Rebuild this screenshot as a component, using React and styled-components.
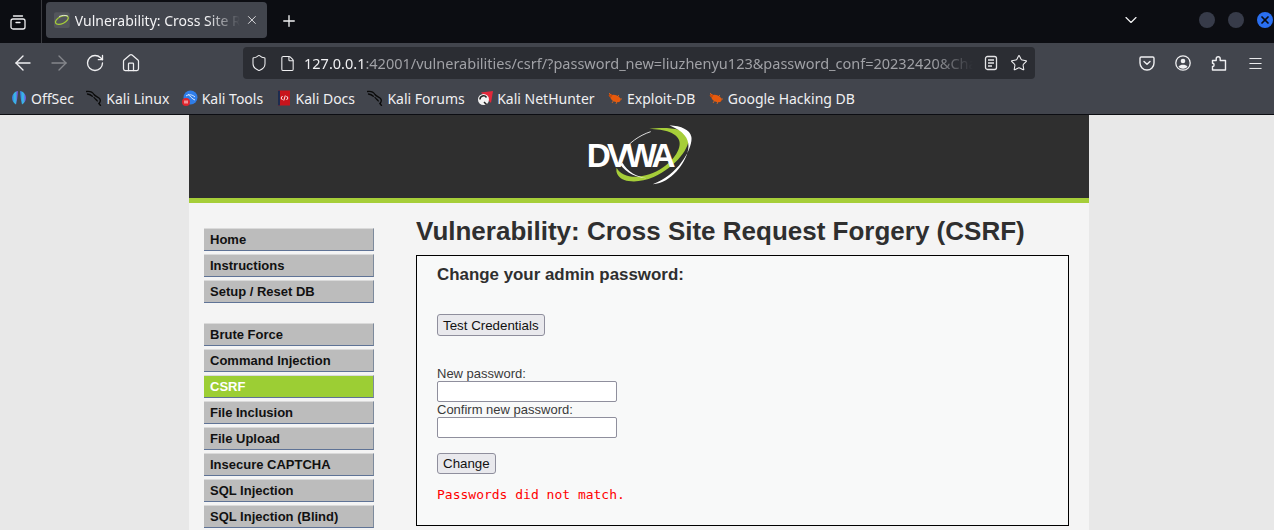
import React from 'react'
import styled, { createGlobalStyle } from 'styled-components'
import {
  ArrowLeft,
  ArrowRight,
  RotateCw,
  House,
  Shield,
  File,
  Star,
  Plus,
  X,
  ChevronDown,
  Menu as MenuIcon,
} from 'lucide-react'

const GlobalStyle = createGlobalStyle`
  html, body {
    margin: 0;
    padding: 0;
    overflow: hidden;
    background: #e8e8e8;
  }
  * { box-sizing: border-box; }
`

const ViewIcon = () => (
  <svg width="16" height="16" viewBox="0 0 16 16" fill="none" stroke="#f0f0f2" strokeWidth="1.300" strokeLinecap="round">
    <rect x="1" y="5" width="14" height="10" rx="2" />
    <path d="M3.500 2h9" />
    <path d="M6 8.500h4" />
  </svg>
)

const TabFavicon = () => (
  <svg width="16" height="16" viewBox="0 0 16 16" fill="none">
    <rect width="16" height="16" rx="2" fill="#53565c" />
    <ellipse cx="8" cy="8" rx="7" ry="3.600" transform="rotate(-25 8 8)" stroke="#a6ce39" strokeWidth="1.300" />
    <path d="M5 4.500C8 3 12 3 14 4" stroke="#eee" strokeWidth="0.800" />
  </svg>
)

const ReaderIcon = () => (
  <svg width="14" height="16" viewBox="0 0 14 16" fill="none" stroke="#e4e4e6" strokeWidth="1.300">
    <rect x="1.500" y="1.500" width="11" height="13" rx="2" />
    <path d="M4 5h6M4 8h6M4 11h4" />
  </svg>
)

const PocketIcon = () => (
  <svg width="16" height="16" viewBox="0 0 16 16" fill="none" stroke="#f0f0f2" strokeWidth="1.400" strokeLinecap="round" strokeLinejoin="round">
    <path d="M2.200 2h11.600c.7 0 1.200.5 1.200 1.200V8a7 7 0 0 1-14 0V3.200C1 2.500 1.500 2 2.200 2z" />
    <path d="M5 6.500 8 9.300l3-2.800" />
  </svg>
)

const AccountIcon = () => (
  <svg width="16" height="16" viewBox="0 0 16 16" fill="none" stroke="#f0f0f2" strokeWidth="1.300">
    <circle cx="8" cy="8" r="7.200" />
    <circle cx="8" cy="6" r="2.300" fill="#f0f0f2" stroke="none" />
    <path d="M3.500 11.800c1-1.500 2.600-2 4.500-2s3.500.5 4.500 2c-1 1.300-2.600 2-4.500 2s-3.500-.7-4.500-2z" fill="#f0f0f2" stroke="none" />
  </svg>
)

const PuzzleIcon = () => (
  <svg width="16" height="16" viewBox="0 0 16 16" fill="none" stroke="#f0f0f2" strokeWidth="1.400" strokeLinejoin="round">
    <path d="M1.500 15v-3.500a1.600 1.600 0 0 0 0-3.200V5.500h3.700V3.800a2 2 0 0 1 4 0v1.700h5.300V15z" />
  </svg>
)

const MetaIcon = () => (
  <svg width="16" height="16" viewBox="0 0 16 16">
    <defs>
      <linearGradient id="offsec" x1="0" x2="1" y1="0" y2="0">
        <stop offset="0" stopColor="#3b6fe0" />
        <stop offset="0.5" stopColor="#35c3e6" />
        <stop offset="1" stopColor="#7a3fd6" />
      </linearGradient>
    </defs>
    <path d="M7 1C3.500 1.500 1 4.500 1 8c0 2.800 1.600 5.200 4 6.400C6 11 6.800 6 7 1z" fill="url(#offsec)" />
    <path d="M9 1c3.500.5 6 3.500 6 7 0 2.800-1.600 5.200-4 6.400C10 11 9.200 6 9 1z" fill="url(#offsec)" />
  </svg>
)

const DragonIcon = () => (
  <svg width="16" height="16" viewBox="0 0 16 16" fill="none" stroke="#0a0a0a" strokeWidth="1.300" strokeLinecap="round">
    <path d="M0.500 1.500C4 1 6.500 2 8 4.500c1.500 2 4 2.500 5.500 4 1 1.200.8 3.500-.5 5" />
    <path d="M1.500 4c2 .2 3.500 1 4.800 2.300M8 7.500c1 1.500 2.500 2 3.300 3.500M13 13.500l1.500 2" />
  </svg>
)

const ToolsIcon = () => (
  <svg width="16" height="16" viewBox="0 0 16 16">
    <circle cx="8.500" cy="7.500" r="7" fill="#2f7de8" />
    <path d="M4 6c3-2 6-1.500 9 1M6 4c2 2 4 5 7 6" stroke="#d8e8ff" strokeWidth="1" fill="none" />
    <circle cx="4" cy="12" r="4" fill="#e0242c" />
    <path d="M3 10.500v3M5 10.500v3" stroke="#fff" strokeWidth="1" />
  </svg>
)

const DocsIcon = () => (
  <svg width="16" height="16" viewBox="0 0 16 16">
    <rect x="2" y="0.500" width="12" height="15" fill="#c8141c" />
    <rect x="2" y="0.500" width="2" height="15" fill="#1d2c50" />
    <path d="M6.500 6 5 8l1.500 2M10.500 6 12 8l-1.500 2M9.300 5.500 7.800 10.500" stroke="#fff" strokeWidth="0.900" fill="none" />
  </svg>
)

const NetHunterIcon = () => (
  <svg width="16" height="16" viewBox="0 0 16 16">
    <path d="M4 2.500 16 1 14 13z" fill="#e2283a" />
    <circle cx="6.500" cy="9.500" r="5.500" fill="#f2f2f2" />
    <path d="M3 9.500a3.500 3.500 0 0 1 6.500-2M7 12l2.500 2.500" stroke="#222" strokeWidth="1.500" fill="none" />
  </svg>
)

const BugIcon = () => (
  <svg width="16" height="16" viewBox="0 0 16 16">
    <ellipse cx="8.500" cy="8.500" rx="5.500" ry="3.300" transform="rotate(25 8.500 8.500)" fill="#e8590c" />
    <circle cx="3.500" cy="5.500" r="1.700" fill="#c94a08" />
    <path d="M2 3 4 5M5 13l2-3M9 14l1-3M12 5 10 7M15 9h-3" stroke="#d9641c" strokeWidth="0.900" />
  </svg>
)

const DvwaLogo = () => (
  <svg width="106" height="60" viewBox="78 30 318 180">
    <path d="M268 42c40-6 108-4 117 22 9 30-36 92-104 122-46 20-92 16-106-4-6-8-7-16-5-24 14 28 56 34 98 20 58-20 98-70 90-100-6-24-44-36-90-36z" fill="#a6ce39" />
    <path d="M328 31c36 2 62 14 66 34 6 30-34 112-116 143 58-4 96-66 104-94 8-28 6-58-54-83z" fill="#fff" />
    <path d="M272 50c-36 12-66 34-84 62" stroke="#fff" strokeWidth="2.500" fill="none" />
    <path d="M180 148c18 26 52 42 84 42-34-4-62-20-76-46z" fill="#fff" />
    <text x="80" y="155" fontFamily="'Liberation Sans', Arial, sans-serif" fontWeight="700" fontSize="100" letterSpacing="-11" fill="#fff">DVWA</text>
  </svg>
)

const Shell = styled.div`
  height: 530px;
  display: flex;
  flex-direction: column;
  overflow: hidden;
  font-family: 'Noto Sans', 'Open Sans', sans-serif;
`

const TabBar = styled.div`
  height: 43px;
  flex: none;
  background: #0c0d12;
  display: flex;
  align-items: flex-start;
  color: #f2f2f4;
`

const ViewButton = styled.div`
  width: 42px;
  height: 43px;
  display: flex;
  align-items: center;
  justify-content: center;
  padding: 0 5px 0 0;
  border-right: 1px solid #3a3b40;
`

const Tab = styled.div`
  width: 221px;
  height: 36px;
  margin: 2px 0 0 4px;
  background: #42454d;
  border-radius: 4px;
  display: flex;
  align-items: center;
  padding: 0 8px;
  gap: 5px;
`

const TabTitle = styled.span`
  width: 168px;
  font-size: 14px;
  white-space: nowrap;
  overflow: hidden;
  -webkit-mask-image: linear-gradient(to right, #000 80%, transparent 100%);
  mask-image: linear-gradient(to right, #000 80%, transparent 100%);
`

const NewTab = styled.div`
  margin: 12px 0 0 13px;
  display: flex;
`

const WindowControls = styled.div`
  height: 40px;
  margin-left: auto;
  display: flex;
  align-items: center;
  padding-right: 1px;
`

const Chevron = styled.div`
  display: flex;
  margin-right: 45px;
`

const WinButton = styled.div`
  width: 16px;
  height: 16px;
  border-radius: 50%;
  margin-left: 13px;
  background: ${(p) => (p.$close ? '#2a6ff0' : '#373b49')};
  display: flex;
  align-items: center;
  justify-content: center;
  color: #0a0c12;
`

const NavBar = styled.div`
  height: 36px;
  flex: none;
  background: #42454d;
  display: flex;
  align-items: flex-start;
  padding-top: 4px;
  color: #f0f0f2;
`

const NavButtons = styled.div`
  width: 243px;
  height: 32px;
  display: flex;
  align-items: center;
  padding-left: 5px;
`

const ToolButton = styled.div`
  width: ${(p) => p.$w || 36}px;
  height: 32px;
  flex: none;
  display: flex;
  align-items: center;
  justify-content: center;
`

const UrlBar = styled.div`
  width: 792px;
  height: 32px;
  background: #2b2d33;
  border-radius: 4px;
  display: flex;
  align-items: center;
  padding: 0 2px;
`

const UrlText = styled.div`
  width: 669px;
  margin: 0 4px 0 3px;
  font-size: 14.500px;
  white-space: nowrap;
  overflow: hidden;
  color: #a0a1a6;
  -webkit-mask-image: linear-gradient(to right, #000 94%, transparent 100%);
  mask-image: linear-gradient(to right, #000 94%, transparent 100%);

  strong {
    font-weight: 400;
    color: #f0f0f2;
  }
`

const ToolActions = styled.div`
  height: 32px;
  margin-left: auto;
  padding-right: 1px;
  display: flex;
  align-items: center;
`

const BookmarkBar = styled.div`
  height: 36px;
  flex: none;
  background: #42454d;
  border-bottom: 1px solid #0c0d12;
  display: flex;
  align-items: flex-start;
  padding: 10px 0 0 11px;
  gap: 12.400px;
`

const Bookmark = styled.div`
  display: flex;
  align-items: center;
  gap: 4px;
  height: 18px;
  font-size: 14px;
  color: #f0f0f2;
  white-space: nowrap;
`

const Page = styled.div`
  flex: 1;
  min-height: 0;
  background: #e8e8e8;
  display: flex;
  justify-content: center;
  padding-left: 4px;
  font-family: 'Liberation Sans', Arial, sans-serif;
  color: #2f2f2f;
`

const Container = styled.div`
  width: 900px;
  background: #f4f4f4;
`

const Header = styled.header`
  height: 88px;
  background: #2f2f2f;
  border-bottom: 5px solid #a6ce39;
  display: flex;
  justify-content: center;
  padding-top: 10px;
`

const Body = styled.div`
  display: flex;
  padding: 15px 20px 0 15px;
`

const Sidebar = styled.nav`
  width: 170px;
  flex: none;
  margin-right: 42px;
  padding-top: 10px;
`

const MenuGroup = styled.ul`
  list-style: none;
  margin: 0 0 20px;
  padding: 0;
`

const MenuItem = styled.li`
  height: 23px;
  margin-bottom: 3px;
  padding-left: 6px;
  font-size: 13px;
  font-weight: 700;
  line-height: 22px;
  background: ${(p) => (p.$active ? '#9cce34' : '#bcbcbc')};
  color: ${(p) => (p.$active ? '#fff' : '#111')};
  border-top: 1px solid #dadada;
  border-right: 1px solid #7d8a9c;
  border-bottom: 1px solid #5f7396;
`

const Main = styled.main`
  flex: 1;
`

const Title = styled.h1`
  margin: 0 0 10px;
  font-size: 26px;
  line-height: 27px;
  font-weight: 700;
  color: #2f2f2f;
  white-space: nowrap;
`

const Box = styled.div`
  width: 653px;
  height: 271px;
  background: #f8f9f9;
  border: 1px solid #000;
  padding: 9px 20px 0;
`

const BoxHeading = styled.h3`
  margin: 0 0 30px;
  font-size: 16.900px;
  line-height: 19px;
  font-weight: 700;
`

const Button = styled.button`
  display: block;
  height: ${(p) => p.$h}px;
  padding: 0 5px;
  font-family: 'Liberation Sans', Arial, sans-serif;
  font-size: 13.333px;
  color: #111;
  background: #e9e9ed;
  border: 1px solid #8f8f9d;
  border-radius: 3px;
  margin-bottom: ${(p) => p.$mb}px;
`

const Label = styled.label`
  display: block;
  font-size: 13px;
  line-height: 15px;
  color: #3a3a3a;
`

const Input = styled.input`
  display: block;
  width: 180px;
  height: 21px;
  background: #fff;
  border: 1px solid #8f8f9d;
  border-radius: 2px;
  padding: 0;
  margin-bottom: ${(p) => p.$mb}px;
`

const ErrorText = styled.pre`
  margin: 0;
  font-family: 'DejaVu Sans Mono', monospace;
  font-size: 13px;
  line-height: 16px;
  color: #f00;
`

const bookmarks = [
  { name: 'OffSec', icon: <MetaIcon /> },
  { name: 'Kali Linux', icon: <DragonIcon /> },
  { name: 'Kali Tools', icon: <ToolsIcon /> },
  { name: 'Kali Docs', icon: <DocsIcon /> },
  { name: 'Kali Forums', icon: <DragonIcon /> },
  { name: 'Kali NetHunter', icon: <NetHunterIcon /> },
  { name: 'Exploit-DB', icon: <BugIcon /> },
  { name: 'Google Hacking DB', icon: <BugIcon /> },
]

const topMenu = ['Home', 'Instructions', 'Setup / Reset DB']
const vulnMenu = [
  'Brute Force',
  'Command Injection',
  'CSRF',
  'File Inclusion',
  'File Upload',
  'Insecure CAPTCHA',
  'SQL Injection',
  'SQL Injection (Blind)',
]

function App() {
  return (
    <Shell>
      <GlobalStyle />
      <TabBar>
        <ViewButton>
          <ViewIcon />
        </ViewButton>
        <Tab>
          <TabFavicon />
          <TabTitle>Vulnerability: Cross Site Request Forgery</TabTitle>
          <X size={14} strokeWidth={1.500} />
        </Tab>
        <NewTab>
          <Plus size={18} strokeWidth={1.800} />
        </NewTab>
        <WindowControls>
          <Chevron>
            <ChevronDown size={20} strokeWidth={1.400} />
          </Chevron>
          <WinButton />
          <WinButton />
          <WinButton $close>
            <X size={12} strokeWidth={3.500} />
          </WinButton>
        </WindowControls>
      </TabBar>

      <NavBar>
        <NavButtons>
          <ToolButton><ArrowLeft size={24} strokeWidth={1.400} /></ToolButton>
          <ToolButton><ArrowRight size={24} strokeWidth={1.400} color="#85878c" /></ToolButton>
          <ToolButton><RotateCw size={20} strokeWidth={1.600} /></ToolButton>
          <ToolButton><House size={20} strokeWidth={1.500} /></ToolButton>
        </NavButtons>
        <UrlBar>
          <ToolButton $w={28}><Shield size={18} strokeWidth={1.400} /></ToolButton>
          <ToolButton $w={28}><File size={17} strokeWidth={1.500} /></ToolButton>
          <UrlText>
            <strong>127.0.0.1</strong>:42001/vulnerabilities/csrf/?password_new=liuzhenyu123&password_conf=20232420&Change=Change
          </UrlText>
          <ToolButton $w={28}><ReaderIcon /></ToolButton>
          <ToolButton $w={28}><Star size={18} strokeWidth={1.400} /></ToolButton>
        </UrlBar>
        <ToolActions>
          <ToolButton><PocketIcon /></ToolButton>
          <ToolButton><AccountIcon /></ToolButton>
          <ToolButton><PuzzleIcon /></ToolButton>
          <ToolButton><MenuIcon size={17} strokeWidth={1.400} /></ToolButton>
        </ToolActions>
      </NavBar>

      <BookmarkBar>
        {bookmarks.map((b) => (
          <Bookmark key={b.name}>
            {b.icon}
            {b.name}
          </Bookmark>
        ))}
      </BookmarkBar>

      <Page>
        <Container>
          <Header>
            <DvwaLogo />
          </Header>
          <Body>
            <Sidebar>
              <MenuGroup>
                {topMenu.map((item) => (
                  <MenuItem key={item}>{item}</MenuItem>
                ))}
              </MenuGroup>
              <MenuGroup>
                {vulnMenu.map((item) => (
                  <MenuItem key={item} $active={item === 'CSRF'}>
                    {item}
                  </MenuItem>
                ))}
              </MenuGroup>
            </Sidebar>
            <Main>
              <Title>Vulnerability: Cross Site Request Forgery (CSRF)</Title>
              <Box>
                <BoxHeading>Change your admin password:</BoxHeading>
                <Button $h={22} $mb={30}>Test Credentials</Button>
                <Label>New password:</Label>
                <Input type="password" $mb={0} />
                <Label>Confirm new password:</Label>
                <Input type="password" $mb={15} />
                <Button $h={21} $mb={13}>Change</Button>
                <ErrorText>Passwords did not match.</ErrorText>
              </Box>
            </Main>
          </Body>
        </Container>
      </Page>
    </Shell>
  )
}

export default App
